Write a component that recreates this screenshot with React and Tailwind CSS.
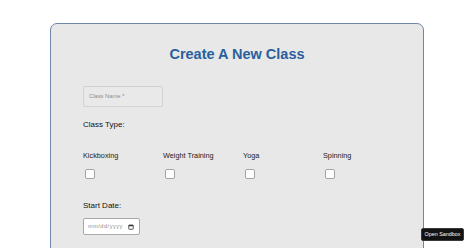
export default function App() {
  const types = ['Kickboxing', 'Weight Training', 'Yoga', 'Spinning']

  return (
    <div className="relative h-[248px] w-full overflow-hidden bg-white font-['Liberation_Sans',Arial,sans-serif]">
      <div className="px-[50px] pt-[23px]">
        <div className="rounded-[7px] border border-[#6f86a8] bg-[#e8e8e8] pb-[30px] pl-[32px] pt-[21px]">
          <h1 className="pr-[32px] text-center text-[14.5px] font-bold leading-[18px] text-[#2a5f9e]">
            Create A New Class
          </h1>

          <div className="mt-[23px] flex h-[21px] w-[80px] items-center rounded-[2px] border border-[#d2d2d2] bg-[#e9e9e9] pl-[5px]">
            <span className="text-[5.8px] text-[#8e8e8e]">Class Name *</span>
          </div>

          <p className="mt-[12.5px] text-[8px] leading-[10px] text-[#111]">Class Type:</p>

          <div className="mt-[21px] grid grid-cols-[80px_80px_80px_80px]">
            {types.map((t) => (
              <div key={t} className="flex flex-col">
                <span className="text-[7.3px] leading-[9px] text-[#222]">{t}</span>
                <input
                  type="checkbox"
                  className="ml-[1.5px] mt-[9px] h-[10px] w-[10px] appearance-none rounded-[2px] border border-[#a3a3a3] bg-white"
                />
              </div>
            ))}
          </div>

          <p className="mt-[22.5px] text-[8px] leading-[10px] text-[#111]">Start Date:</p>

          <div className="mt-[7px] flex h-[17px] w-[57px] items-center justify-between rounded-[2px] border border-[#a9a9a9] bg-white pl-[4px] pr-[5px]">
            <span className="text-[5.6px] tracking-[0.5px] text-[#8a8a8a]">mm/dd/yyyy</span>
            <svg width="6" height="6" viewBox="0 0 12 12" fill="none">
              <rect x="1.5" y="2" width="9" height="8.5" rx="1" stroke="#333" strokeWidth="1.6" />
              <rect x="1.5" y="2" width="9" height="2.5" fill="#333" />
            </svg>
          </div>
        </div>
      </div>

      <button className="absolute bottom-[7.5px] right-[10px] flex h-[13px] w-[43px] items-center justify-center rounded-[2px] border border-[#3a3a3a] bg-[#121212] text-[5.4px] text-white">
        Open Sandbox
      </button>
    </div>
  )
}
